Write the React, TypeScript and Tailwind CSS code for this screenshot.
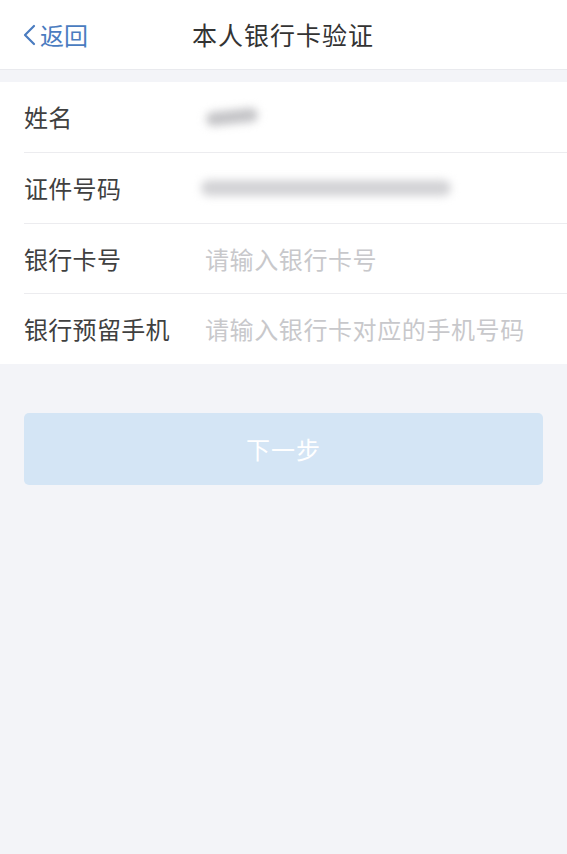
export default function App() {
  const rows = [
    { label: '姓名', blur: 'name', h: 'h-[71px]' },
    { label: '证件号码', blur: 'id', h: 'h-[71px]' },
    { label: '银行卡号', placeholder: '请输入银行卡号', h: 'h-[70px]' },
    { label: '银行预留手机', placeholder: '请输入银行卡对应的手机号码', h: 'h-[70px]' },
  ];

  return (
    <div
      className="min-h-[854px] bg-[#f3f4f8] text-[#333]"
      style={{ fontFamily: '"Noto Sans CJK SC", "Noto Sans", sans-serif' }}
    >
      {/* 顶部导航 */}
      <header className="h-[70px] bg-white flex items-center relative border-b border-[#e9eaee]">
        <button className="flex items-center pl-[22px] text-[#4a7cc0] text-[24px] leading-none">
          <svg width="15" height="24" viewBox="0 0 15 24" fill="none" stroke="currentColor" strokeWidth="2.2" strokeLinecap="round" strokeLinejoin="round">
            <path d="M12 3 L3 12 L12 21" />
          </svg>
          <span className="ml-[3px]">返回</span>
        </button>
        <h1 className="absolute left-[192px] text-[25px] font-normal text-[#333] tracking-[1px]">本人银行卡验证</h1>
      </header>

      {/* 表单 */}
      <div className="mt-[12px] bg-white pl-[24px]">
        {rows.map((row, i) => (
          <div
            key={row.label}
            className={`${row.h} flex items-center ${i < rows.length - 1 ? 'border-b border-[#ececef]' : ''}`}
          >
            <div className="w-[181px] text-[24px] text-[#404040] tracking-[0.3px] whitespace-nowrap">{row.label}</div>
            {row.blur === 'name' && (
              <div className="ml-[1px] h-[14px] w-[52px] rounded-full bg-[#c4c4c7] blur-[4px] -rotate-6" />
            )}
            {row.blur === 'id' && (
              <div className="-ml-[4px] h-[16px] w-[250px] rounded-full bg-[#d3d3d6] blur-[4px]" />
            )}
            {row.placeholder && (
              <input
                className="flex-1 bg-transparent outline-none text-[24px] tracking-[0.6px] placeholder-[#c8c8cb]"
                placeholder={row.placeholder}
              />
            )}
          </div>
        ))}
      </div>

      {/* 下一步 */}
      <div className="px-[24px] pt-[49px]">
        <button className="w-full h-[72px] rounded-[5px] bg-[#d4e5f5] text-white text-[24px] tracking-[1px]">
          下一步
        </button>
      </div>
    </div>
  );
}
